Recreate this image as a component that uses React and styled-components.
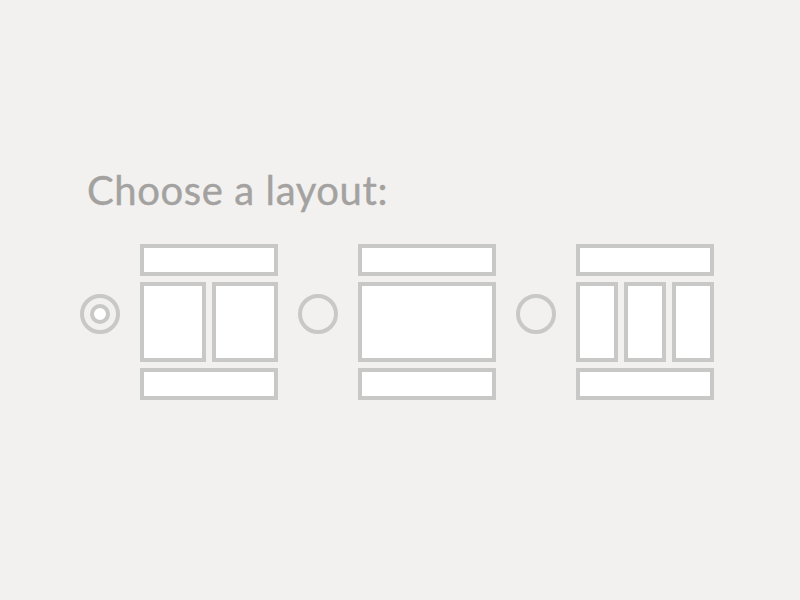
import React from 'react';
import styled, { createGlobalStyle } from 'styled-components';

const GlobalStyle = createGlobalStyle`
    html, body {
        margin: 0;
        padding: 0;
        background: #f2f1ef;
    }
    body {
        font-family: Lato, "Noto Sans", "Liberation Sans", sans-serif;
    }
`

const Page = styled.div`
    width: 800px;
    height: 600px;
    box-sizing: border-box;
    padding: 166px 0 0 80px;
    background: #f2f1ef;
`

const Title = styled.h1`
    margin: 0 0 0 7px;
    font-size: 40px;
    font-weight: 400;
    line-height: 48px;
    color: #a3a2a0;
    letter-spacing: 0.6px;
    -webkit-text-stroke: 0.4px #a3a2a0;
`

const Options = styled.div`
    display: flex;
    gap: 20px;
    margin-top: 30px;
`

const Option = styled.label`
    display: flex;
    align-items: flex-start;
    gap: 20px;
    cursor: pointer;
`

const Radio = styled.span`
    box-sizing: border-box;
    width: 40px;
    height: 40px;
    margin-top: 50px;
    border: 4px solid #c8c8c6;
    border-radius: 50%;
    display: flex;
    align-items: center;
    justify-content: center;
`

const Dot = styled.span`
    box-sizing: border-box;
    width: 20px;
    height: 20px;
    border: 4px solid #c8c8c6;
    border-radius: 50%;
    background: #fff;
`

const Diagram = styled.div`
    width: 138px;
    display: flex;
    flex-direction: column;
    gap: 6px;
`

const Bar = styled.div`
    box-sizing: border-box;
    height: 32px;
    border: 4px solid #c8c8c6;
    background: #fff;
`

const Body = styled.div`
    display: flex;
    gap: 6px;
    height: 80px;
`

const Panel = styled.div`
    box-sizing: border-box;
    flex: 1;
    border: 4px solid #c8c8c6;
    background: #fff;
`

const layouts = [
    { id: 'two', cols: 2 },
    { id: 'one', cols: 1 },
    { id: 'three', cols: 3 },
]

function App() {
    const [selected, setSelected] = React.useState('two')

    return (
        <Page>
            <GlobalStyle />
            <Title>Choose a layout:</Title>
            <Options>
                {layouts.map(layout => (
                    <Option key={layout.id} onClick={() => setSelected(layout.id)}>
                        <Radio>{selected === layout.id && <Dot />}</Radio>
                        <Diagram>
                            <Bar />
                            <Body>
                                {Array.from({ length: layout.cols }).map((_, i) => (
                                    <Panel key={i} />
                                ))}
                            </Body>
                            <Bar />
                        </Diagram>
                    </Option>
                ))}
            </Options>
        </Page>
    )
}

export default App;
